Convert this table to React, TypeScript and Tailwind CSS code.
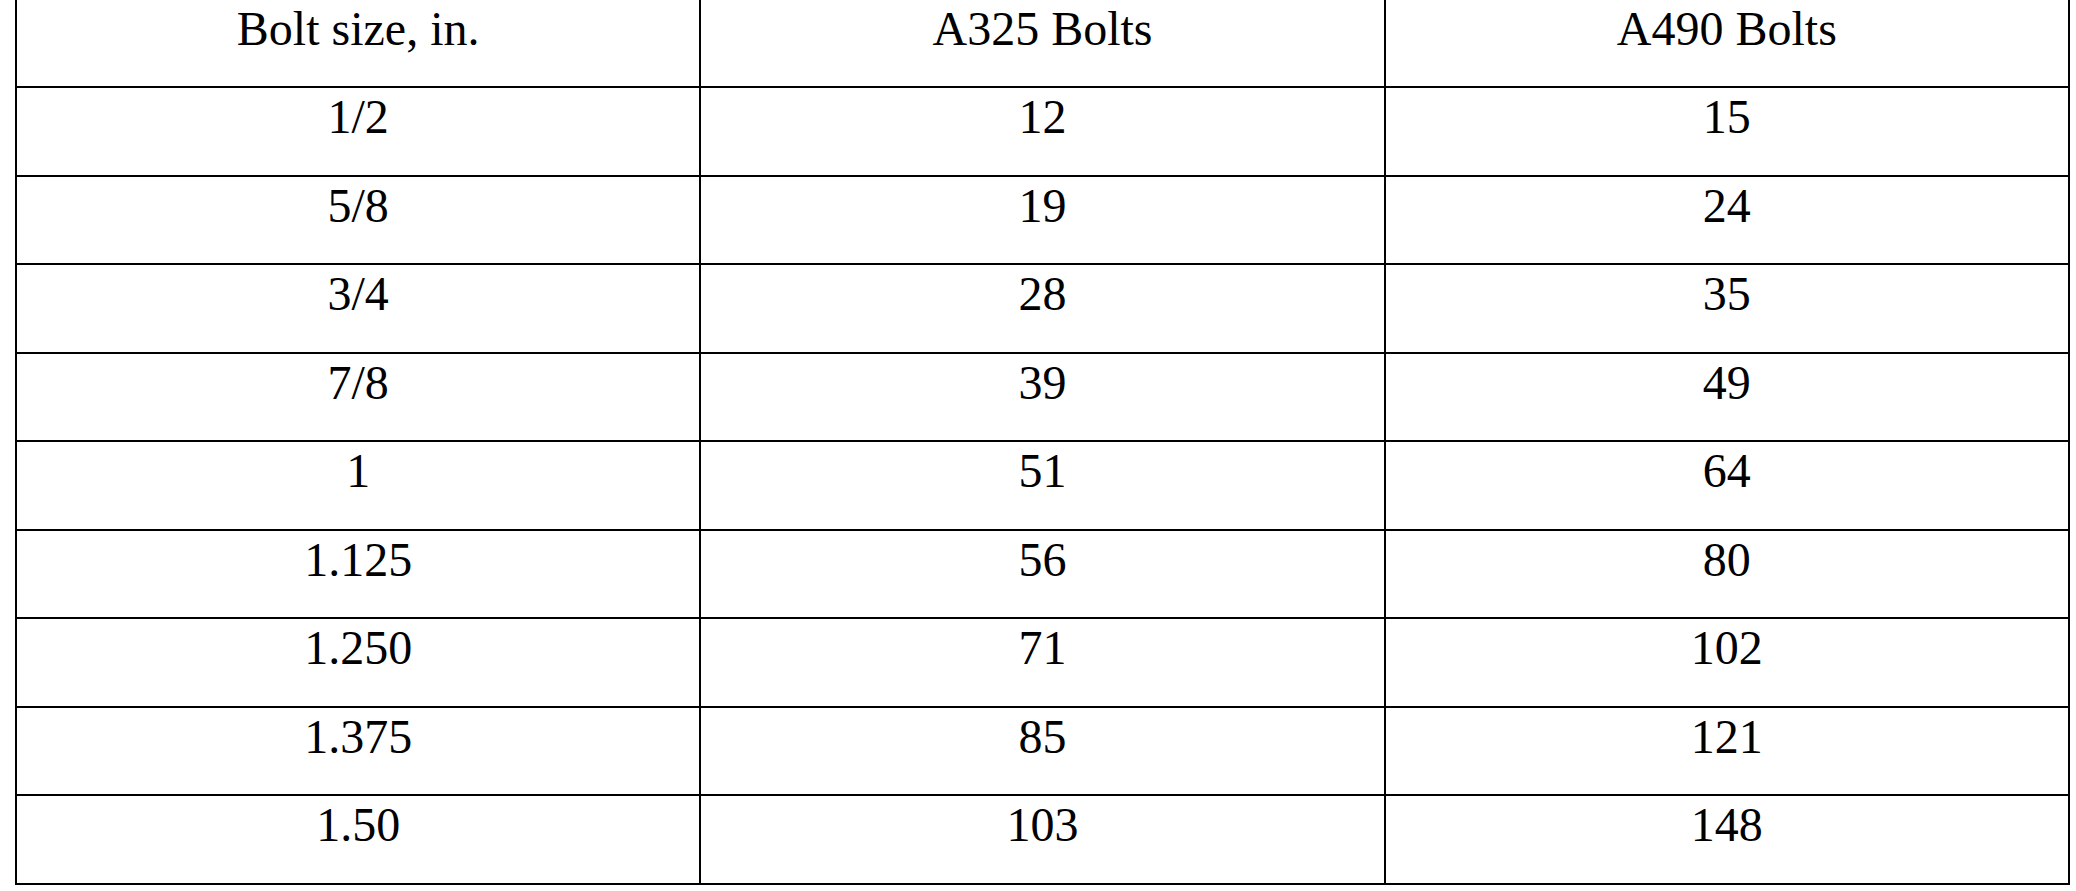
const header = ['Bolt size, in.', 'A325 Bolts', 'A490 Bolts'];

const rows: [string, string, string][] = [
  ['1/2', '12', '15'],
  ['5/8', '19', '24'],
  ['3/4', '28', '35'],
  ['7/8', '39', '49'],
  ['1', '51', '64'],
  ['1.125', '56', '80'],
  ['1.250', '71', '102'],
  ['1.375', '85', '121'],
  ['1.50', '103', '148'],
];

function Cell({ children }: { children: React.ReactNode }) {
  return (
    <div className="h-[88.5px] border-b-2 border-r-2 border-black pt-[5px] text-center text-[48px] leading-[48px] text-black">
      {children}
    </div>
  );
}

export default function App() {
  return (
    <div className="h-[891px] w-[2076px] overflow-hidden bg-white font-['Liberation_Serif',_'Times_New_Roman',_serif]">
      <div className="ml-[15px] mt-[-2.5px] grid w-[2055px] grid-cols-3 border-l-2 border-t-2 border-black">
        {header.map((h) => (
          <Cell key={h}>{h}</Cell>
        ))}
        {rows.map((r) =>
          r.map((v, i) => <Cell key={r[0] + '-' + i}>{v}</Cell>)
        )}
      </div>
    </div>
  );
}
